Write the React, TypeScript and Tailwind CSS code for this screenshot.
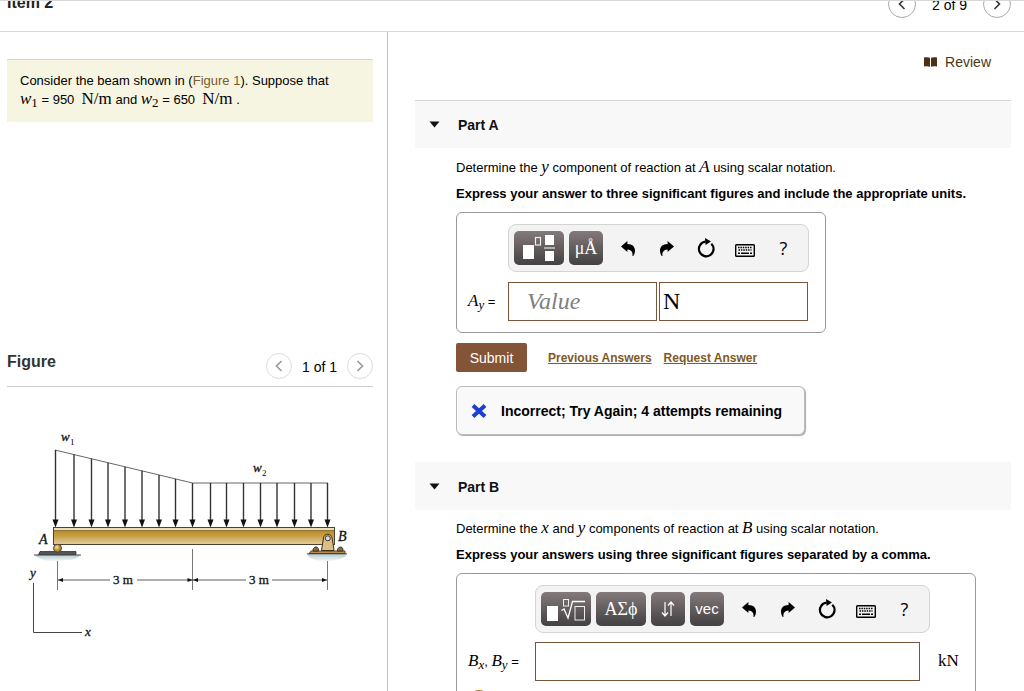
import React, { useState } from 'react';

type MathProps = {
  children: React.ReactNode;
  sub?: string;
};

const MathVar: React.FC<MathProps> = ({ children, sub }) => (
  <span className="font-['Liberation_Serif',serif] text-[17px] leading-none italic">
    {children}
    {sub && <sub className="text-[13px] leading-none">{sub}</sub>}
  </span>
);

const Subscript: React.FC<{ children: React.ReactNode }> = ({ children }) => (
  <sub className="font-['Liberation_Serif',serif] text-[13px] leading-none">{children}</sub>
);

const Unit: React.FC<{ children: React.ReactNode }> = ({ children }) => (
  <span className="font-['Liberation_Serif',serif] text-[17px] leading-none">{children}</span>
);

const Chevron: React.FC<{ direction: 'left' | 'right' }> = ({ direction }) => (
  <svg width="8" height="12" viewBox="0 0 8 12" fill="none" stroke="currentColor" strokeWidth="1.6">
    <path d={direction === 'left' ? 'M6.5 1 1.5 6l5 5' : 'M1.5 1l5 5-5 5'} />
  </svg>
);

const ARROW_PATH = 'M0 5.4 6.400 0v3c4.800.1 7.600 2.600 7.600 6.600 0 2.300-.6 4-1.700 5.400h-.8c.5-4-1-6.300-5.100-6.600V11z';

const UndoIcon = () => (
  <svg width="14" height="15" viewBox="0 0 14 15" fill="currentColor">
    <path d={ARROW_PATH} />
  </svg>
);

const RedoIcon = () => (
  <svg width="14" height="15" viewBox="0 0 14 15" fill="currentColor">
    <path d={ARROW_PATH} transform="matrix(-1 0 0 1 14 0)" />
  </svg>
);

const ResetIcon = () => (
  <svg width="18" height="20" viewBox="0 0 18 20">
    <path d="M14.300 5.700A7.300 7.300 0 1 1 8.500 3.700" fill="none" stroke="currentColor" strokeWidth="2.200" />
    <path d="M8 0l6 3.600L8.500 7z" fill="currentColor" />
  </svg>
);

const KeyboardIcon = () => (
  <svg width="20" height="17" viewBox="0 0 20 17" fill="none" stroke="currentColor">
    <rect x="0.7" y="4.700" width="18.600" height="11.600" rx="0.8" strokeWidth="1.400" />
    <path d="M3 7.500h14M3.500 10h13" strokeWidth="1.600" strokeDasharray="1.500 0.900" />
    <path d="M3 13.300h2M6 13.300h8M15 13.300h2" strokeWidth="1.500" />
  </svg>
);

const TemplateIcon = () => (
  <svg width="34" height="28" viewBox="0 0 34 28" fill="none">
    <rect x="1" y="11" width="11" height="14" fill="white" />
    <rect x="13.500" y="3.500" width="5" height="7.500" stroke="#eee" strokeWidth="1.200" />
    <rect x="23" y="1" width="9" height="10" fill="white" />
    <path d="M22 14h11" stroke="#ccc" strokeWidth="1.500" />
    <rect x="23" y="17" width="9" height="10" fill="white" />
  </svg>
);

const RootIcon = () => (
  <svg width="40" height="26" viewBox="0 0 40 26" fill="none">
    <rect x="1" y="10" width="11" height="15" fill="white" />
    <rect x="17.500" y="3.500" width="5" height="6.500" stroke="#eee" />
    <path d="M15.500 14.500 18 13l4 9 4.500-16.500H39" stroke="white" strokeWidth="1.300" />
    <rect x="29" y="10.500" width="9.500" height="13.500" stroke="#eee" />
  </svg>
);

const ToolKey: React.FC<{ label: string; wide?: boolean; children: React.ReactNode }> = ({ label, wide, children }) => (
  <button
    type="button"
    aria-label={label}
    className={`flex h-[34px] items-center justify-center rounded-[5px] bg-linear-to-b from-[#857a7b] to-[#434142] text-white ${wide ? 'w-[50px]' : 'w-[34px]'}`}
  >
    {children}
  </button>
);

const actions = [
  { label: 'Undo', icon: <UndoIcon /> },
  { label: 'Redo', icon: <RedoIcon /> },
  { label: 'Reset', icon: <ResetIcon /> },
  { label: 'Keyboard shortcuts', icon: <KeyboardIcon /> },
  { label: 'Help', icon: <span className="font-['Open_Sans',sans-serif] text-lg">?</span> },
];

const Toolbar: React.FC<{ children: React.ReactNode }> = ({ children }) => (
  <div className="flex w-fit gap-[5px] rounded-lg border border-[#d4d4d4] bg-[#f3f3f3] px-[5px] py-[6px]">
    {children}
    <div className="flex">
      {actions.map(({ label, icon }) => (
        <button key={label} type="button" aria-label={label} className="flex h-[34px] w-[39px] items-center justify-center">
          {icon}
        </button>
      ))}
    </div>
  </div>
);

const PartHeader: React.FC<{ title: string; divider?: boolean }> = ({ title, divider }) => (
  <h2 className={`border-t bg-[#f8f8f8] ${divider ? 'border-[#d6d6d6]' : 'border-[#f8f8f8]'}`}>
    <button type="button" className="flex h-[47px] w-full items-center gap-[18px] pl-[14px] text-sm font-bold text-[#111]">
      <svg width="11" height="7" viewBox="0 0 11 7" fill="currentColor">
        <path d="M0.500 0.500h10L5.500 6.500z" />
      </svg>
      {title}
    </button>
  </h2>
);

const loadArrows = [55.5, 74, 91.5, 108, 125, 142, 159, 175.5, 192.5, 210.5, 226.5, 243.5, 260.5, 277, 294.5, 311, 327.5];
const loadTop = (x: number) => (x < 192.5 ? 450 + ((x - 55.5) * 33) / 137 : 483);

const BeamFigure = () => (
  <svg viewBox="7 400 366 250" className="mt-[13px] w-full" role="img" aria-label="Beam with distributed load" fontFamily="Liberation Serif, serif">
    <defs>
      <linearGradient id="beam" x1="0" y1="0" x2="0" y2="1">
        <stop offset="0" stopColor="#b78c20" />
        <stop offset="0.45" stopColor="#c39a3e" />
        <stop offset="1" stopColor="#e5cfa0" />
      </linearGradient>
      <linearGradient id="ground" x1="0" y1="0" x2="0" y2="1">
        <stop offset="0" stopColor="#b4cbd2" />
        <stop offset="1" stopColor="#b4cbd2" stopOpacity="0.1" />
      </linearGradient>
      <radialGradient id="roller" cx="0.4" cy="0.35">
        <stop offset="0" stopColor="#f5dfaa" />
        <stop offset="1" stopColor="#a7802d" />
      </radialGradient>
    </defs>

    {/* distributed load */}
    <path d="M55 450 192.500 483H328" fill="none" stroke="#555" strokeWidth="0.9" />
    {loadArrows.map((x) => (
      <g key={x}>
        <path d={`M${x} ${loadTop(x)}V521`} stroke="#333" strokeWidth="1.4" />
        <path d={`M${x - 3} 519.500h6l-3 8z`} fill="#111" />
      </g>
    ))}

    {/* beam */}
    <rect x="53.500" y="527.500" width="281" height="17" fill="url(#beam)" stroke="#4d4230" />
    <path d="M54 528h280v2.500H54z" fill="#ecdcb8" />
    <path d="M54 530.700h280" stroke="#6b5525" strokeWidth="0.8" />

    {/* roller support at A */}
    <path d="M35 555h45c-3 5-9 5-15 5-8 3-26 1-30-5z" fill="url(#ground)" />
    <path d="M40 551.500h36v3H38.500z" fill="#555" stroke="#222" strokeWidth="0.7" />
    <path d="M34 555h47" stroke="#444" />
    <circle cx="57.500" cy="548.300" r="4" fill="url(#roller)" stroke="#4b3c1c" strokeWidth="0.9" />

    {/* pin support at B */}
    <path d="M307 554h40c-2 5-10 5-15 7-9 1-22 0-25-7z" fill="url(#ground)" />
    <path d="M307 553.800h40" stroke="#555" />
    <path d="M311 551h34v2.500h-36z" fill="#b48d52" stroke="#3b2d18" strokeWidth="0.8" />
    <path d="M313 551v-2l2-2h2l1.500 2v2zM337.500 551v-2l2-2h2l1.500 2v2z" fill="#8c6d3b" stroke="#2d2418" strokeWidth="0.8" />
    <path d="M321.500 550.500 323.500 538c.6-5 7.800-5 8.600 0l2 12.500z" fill="#dfbd83" stroke="#3b2d18" />
    <circle cx="327.800" cy="538.300" r="2.500" fill="#ddd" stroke="#333" />

    {/* dimensions */}
    <path d="M57.500 561v29M192.500 549v41M327.500 561v29" stroke="#666" strokeWidth="0.9" />
    <path d="M58 580h52M137 580h56M193 580h53M272 580h55" stroke="#333" strokeWidth="0.8" />
    <path d="M58 580l5-2v4zM192.500 580l-5-2v4zM193 580l5-2v4zM327 580l-5-2v4z" fill="#111" />
    <g fill="#111" stroke="#111" strokeWidth="0.3" fontSize="13">
      <text x="113" y="584">3 m</text>
      <text x="249" y="584">3 m</text>
    </g>

    {/* axes */}
    <path d="M33.500 583v49.500H82" fill="none" stroke="#444" />
    <g fill="#111" stroke="#111" strokeWidth="0.3" fontStyle="italic" fontSize="13">
      <text x="30" y="577">y</text>
      <text x="85" y="636">x</text>
      <text x="61" y="441">w</text>
      <text x="253" y="472">w</text>
      <text x="39" y="544" fontSize="14">A</text>
      <text x="338" y="541" fontSize="14">B</text>
    </g>
    <text x="70" y="445" fontSize="9">1</text>
    <text x="262" y="476" fontSize="9">2</text>
  </svg>
);

const App: React.FC = () => {
  const [value, setValue] = useState('');
  const [unit, setUnit] = useState('N');
  const [components, setComponents] = useState('');

  return (
    <div className="flex h-screen flex-col overflow-hidden bg-white font-['Liberation_Sans',Arial,sans-serif] text-[13px] leading-[18px] text-black">
      <header className="flex h-8 shrink-0 items-end justify-between overflow-hidden border-y border-[#d8d8d8] pr-[13px] pb-[13px] pl-[7px]">
        <h1 className="pb-[3px] text-base font-bold text-[#222]">Item 2</h1>
        <nav className="flex items-center gap-4 text-sm">
          <button type="button" aria-label="Previous item" className="flex size-7 items-center justify-center rounded-full border border-[#aaa] text-[#333]">
            <Chevron direction="left" />
          </button>
          <span className="pt-[2px]">2 of 9</span>
          <button type="button" aria-label="Next item" className="flex size-7 items-center justify-center rounded-full border border-[#aaa] text-[#333]">
            <Chevron direction="right" />
          </button>
        </nav>
      </header>

      <div className="flex min-h-0 flex-1">
        <aside className="w-[388px] shrink-0 border-r border-[#dabfae] pr-[14px] pl-[7px]">
          <section className="min-h-[313px] pt-[27px]">
            <p className="border-t border-[#d5d5cc] bg-[#f6f5e1] px-[13px] pt-3 pb-[13px]">
              Consider the beam shown in (<a href="#figure" className="text-[#7d5a29]">Figure 1</a>). Suppose that
              <br />
              <MathVar>w</MathVar><Subscript>1</Subscript> = 950 &nbsp;<Unit>N/m</Unit> and{' '}
              <MathVar>w</MathVar><Subscript>2</Subscript> = 650 &nbsp;<Unit>N/m</Unit> .
            </p>
          </section>

          <section id="figure">
            <div className="flex h-[42px] items-center justify-between border-b border-[#cfcfcf]">
              <h2 className="pb-2 text-base font-bold text-[#333]">Figure</h2>
              <div className="flex items-center gap-[10px] text-sm">
                <button type="button" aria-label="Previous figure" className="flex size-[26px] items-center justify-center rounded-full border border-[#ddd] text-[#999]">
                  <Chevron direction="left" />
                </button>
                <span className="pt-[3px]">1 of 1</span>
                <button type="button" aria-label="Next figure" className="flex size-[26px] items-center justify-center rounded-full border border-[#ddd] text-[#999]">
                  <Chevron direction="right" />
                </button>
              </div>
            </div>
            <BeamFigure />
          </section>
        </aside>

        <main className="min-w-0 flex-1 pr-[13px] pl-[27px]">
          <div className="flex h-[68px] justify-end pt-5 pr-5">
            <a href="#review" className="flex h-5 items-center gap-2 text-sm text-[#4b3519]">
              <svg width="13" height="10" viewBox="0 0 13 10" fill="#4d3012">
                <path d="M0 .5C2 0 4.500 0 6 .8v9C4.500 9 2 9 0 9.500zM7 .8C8.500 0 11 0 13 .5v9c-2-.5-4.500-.5-6 .3z" />
              </svg>
              Review
            </a>
          </div>

          <PartHeader title="Part A" divider />
          <div className="pb-[27px] pl-[41px]">
            <p className="pt-[10px]">
              Determine the <MathVar>y</MathVar> component of reaction at <MathVar>A</MathVar> using scalar notation.
            </p>
            <p className="pt-2 font-bold">Express your answer to three significant figures and include the appropriate units.</p>

            <div className="mt-[9px] grid w-fit grid-cols-[40px_auto] items-center gap-y-[10px] rounded-md border border-[#999] py-[11px] pr-4 pl-[11px]">
              <div className="col-start-2">
                <Toolbar>
                  <ToolKey label="Templates" wide><TemplateIcon /></ToolKey>
                  <ToolKey label="Units">
                    <span className="font-['Liberation_Serif',serif] text-lg">μÅ</span>
                  </ToolKey>
                </Toolbar>
              </div>
              <label htmlFor="ay-value"><MathVar sub="y">A</MathVar> =</label>
              <div className="flex gap-[2px]">
                <input
                  id="ay-value"
                  value={value}
                  onChange={(e) => setValue(e.target.value)}
                  placeholder="Value"
                  className="h-[39px] w-[149px] border border-[#7a5539] px-[18px] font-['Liberation_Serif',serif] text-2xl placeholder:text-[#808080] placeholder:italic"
                />
                <input
                  aria-label="Units"
                  value={unit}
                  onChange={(e) => setUnit(e.target.value)}
                  className="h-[39px] w-[149px] border border-[#7a5539] px-[3px] font-['Liberation_Serif',serif] text-2xl"
                />
              </div>
            </div>

            <div className="mt-[10px] flex items-center">
              <button type="button" className="h-[29px] w-[71px] rounded-xs bg-[#835437] text-sm text-white">Submit</button>
              <a href="#previous" className="ml-[21px] text-xs font-bold text-[#805a25] underline">Previous Answers</a>
              <a href="#request" className="ml-3 text-xs font-bold text-[#805a25] underline">Request Answer</a>
            </div>

            <div className="mt-[14px] flex h-[49px] w-[349px] items-center gap-[14px] rounded-md border border-[#bbb] bg-[#f9f9f9] px-[14px] text-sm font-bold shadow-[1px_1px_1px_#aaa]">
              <svg width="16" height="14" viewBox="0 0 16 14" stroke="#1d3fd0" strokeWidth="4">
                <path d="M2 1.500 14 12.500M14 1.500 2 12.500" />
              </svg>
              Incorrect; Try Again; 4 attempts remaining
            </div>
          </div>

          <PartHeader title="Part B" />
          <div className="pl-[41px]">
            <p className="pt-[9px]">
              Determine the <MathVar>x</MathVar> and <MathVar>y</MathVar> components of reaction at <MathVar>B</MathVar> using scalar notation.
            </p>
            <p className="pt-2 font-bold">Express your answers using three significant figures separated by a comma.</p>

            <div className="mt-[9px] grid w-fit grid-cols-[67px_auto_auto] items-center gap-y-[9px] rounded-md border border-[#999] py-[11px] pr-4 pl-[11px]">
              <div className="col-start-2">
                <Toolbar>
                  <ToolKey label="Templates" wide><RootIcon /></ToolKey>
                  <ToolKey label="Greek symbols" wide>
                    <span className="font-['Liberation_Serif',serif] text-lg">ΑΣϕ</span>
                  </ToolKey>
                  <ToolKey label="Arrows">
                    <svg width="14" height="16" viewBox="0 0 14 16" fill="none" stroke="white" strokeWidth="1.200">
                      <path d="M4 1v14M1 11.500 4 15l3-3.500M10 15V1M7 4.500 10 1l3 3.500" />
                    </svg>
                  </ToolKey>
                  <ToolKey label="Vector"><span className="text-[15px]">vec</span></ToolKey>
                </Toolbar>
              </div>
              <label htmlFor="b-components" className="col-start-1">
                <MathVar sub="x">B</MathVar>, <MathVar sub="y">B</MathVar> =
              </label>
              <div className="pr-[10px]">
                <input
                  id="b-components"
                  value={components}
                  onChange={(e) => setComponents(e.target.value)}
                  className="h-[39px] w-full border border-[#7a5539] px-2 font-['Liberation_Serif',serif] text-2xl"
                />
              </div>
              <span className="pl-2"><Unit>kN</Unit></span>
              <button type="button" aria-label="Hint" className="size-[22px] rounded-full bg-[#b07a1c]" />
            </div>
          </div>
        </main>
      </div>
    </div>
  );
};

export default App;
